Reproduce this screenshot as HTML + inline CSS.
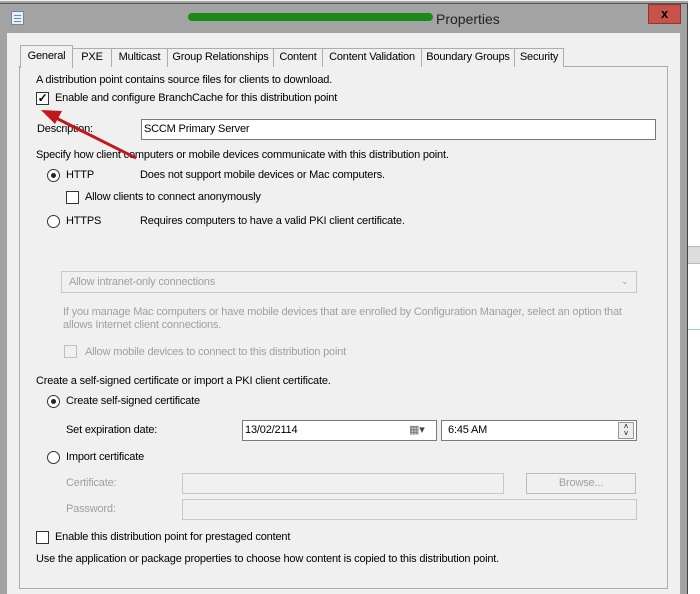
<!DOCTYPE html>
<html><head><meta charset="utf-8"><style>
*{margin:0;padding:0;box-sizing:border-box}
body{width:700px;height:594px;overflow:hidden;background:#fff;font-family:"Liberation Sans",sans-serif;font-size:11px;letter-spacing:-0.18px;color:#000;position:relative}
.a{position:absolute;white-space:nowrap;line-height:14px}
.g{color:#a0a0a0}
.box{position:absolute;background:#fff;border:1px solid #7a7a7a}
.dis{position:absolute;border:1px solid #c8c8c8;background:#f0f0f0}
.cb{position:absolute;width:13px;height:13px;border:1px solid #333;background:#fff}
.rb{position:absolute;width:13px;height:13px;border:1px solid #333;border-radius:50%;background:#fff}
.rb.on::after{content:"";position:absolute;left:3px;top:3px;width:5px;height:5px;border-radius:50%;background:#222}
.tab{position:absolute;top:48px;height:19px;border:1px solid #adadad;border-bottom:none;background:#f0f0f0;text-align:center;line-height:17px;white-space:nowrap;overflow:hidden}
</style></head><body>
<div style="position:absolute;left:0;top:0;width:688px;height:594px;background:#a3a3a3;border-top:1px solid #f0f0f0"></div>
<div style="position:absolute;left:0;top:3px;width:688px;height:1px;background:#555"></div>
<div style="position:absolute;left:687px;top:3px;width:1px;height:591px;background:#444"></div>
<div style="position:absolute;left:688px;top:246px;width:12px;height:18px;background:#ddd;border-top:1px solid #bbb;border-bottom:1px solid #bbb"></div>
<div style="position:absolute;left:688px;top:329px;width:12px;height:1px;background:#9cc"></div>
<div style="position:absolute;left:648px;top:4px;width:33px;height:20px;background:#c7524a;border:1px solid #8a3a35;color:#000;font-weight:bold;text-align:center;line-height:17px;font-size:13px">x</div>
<div style="position:absolute;left:11px;top:11px;width:13px;height:14px;border:1px solid #6a8aa0;background:#e8eef4"><div style="margin:3px 2px;height:1px;background:#6a8aa0;box-shadow:0 3px 0 #6a8aa0,0 6px 0 #6a8aa0"></div></div>
<div style="position:absolute;left:188px;top:13px;width:245px;height:8px;background:#1a8a1a;border-radius:4px"></div>
<div class="a" style="left:436px;top:10px;font-size:14px;letter-spacing:0;line-height:18px;color:#222">Properties</div>
<div style="position:absolute;left:7px;top:33px;width:673px;height:561px;background:#f0f0f0"></div>
<div style="position:absolute;left:19px;top:66px;width:649px;height:523px;border:1px solid #adadad;background:#f0f0f0"></div>
<div class="tab" style="left:72px;width:40px">PXE</div>
<div class="tab" style="left:111px;width:57px">Multicast</div>
<div class="tab" style="left:167px;width:107px">Group Relationships</div>
<div class="tab" style="left:273px;width:50px">Content</div>
<div class="tab" style="left:322px;width:100px">Content Validation</div>
<div class="tab" style="left:421px;width:94px">Boundary Groups</div>
<div class="tab" style="left:514px;width:50px">Security</div>
<div class="tab" style="left:20px;top:45px;width:53px;height:23px;background:#f0f0f0;line-height:21px;z-index:2">General</div>

<div class="a" style="left:36px;top:73px">A distribution point contains source files for clients to download.</div>
<div class="cb" style="left:36px;top:92px;text-align:center;line-height:11px;font-size:12px;font-weight:bold">✓</div>
<div class="a" style="left:55px;top:91px">Enable and configure BranchCache for this distribution point</div>
<div class="a" style="left:37px;top:122px">Description:</div>
<div class="box" style="left:141px;top:119px;width:515px;height:21px"></div>
<div class="a" style="left:144px;top:122px">SCCM Primary Server</div>
<div class="a" style="left:36px;top:148px">Specify how client computers or mobile devices communicate with this distribution point.</div>
<div class="rb on" style="left:47px;top:169px"></div>
<div class="a" style="left:66px;top:168px">HTTP</div>
<div class="a" style="left:140px;top:168px">Does not support mobile devices or Mac computers.</div>
<div class="cb" style="left:66px;top:191px"></div>
<div class="a" style="left:85px;top:190px">Allow clients to connect anonymously</div>
<div class="rb" style="left:47px;top:215px"></div>
<div class="a" style="left:66px;top:214px">HTTPS</div>
<div class="a" style="left:140px;top:214px">Requires computers to have a valid PKI client certificate.</div>
<div class="dis" style="left:61px;top:271px;width:576px;height:22px;background:#f0f0f0;border-color:#c8c8c8"></div>
<div class="a g" style="left:69px;top:275px">Allow intranet-only connections</div>
<div class="a g" style="left:621px;top:274px;font-size:9px">⌄</div>
<div class="a g" style="left:63px;top:305px">If you manage Mac computers or have mobile devices that are enrolled by Configuration Manager, select an option that</div>
<div class="a g" style="left:63px;top:318px">allows Internet client connections.</div>
<div class="cb" style="left:64px;top:345px;border-color:#c0c0c0;background:#f0f0f0"></div>
<div class="a g" style="left:85px;top:345px">Allow mobile devices to connect to this distribution point</div>
<div class="a" style="left:36px;top:374px">Create a self-signed certificate or import a PKI client certificate.</div>
<div class="rb on" style="left:47px;top:395px"></div>
<div class="a" style="left:66px;top:394px">Create self-signed certificate</div>
<div class="a" style="left:66px;top:423px">Set expiration date:</div>
<div class="box" style="left:242px;top:420px;width:195px;height:21px"></div>
<div class="a" style="left:245px;top:423px">13/02/2114</div>
<div class="a" style="left:409px;top:423px;color:#666;font-size:11px">▦<span style="color:#445">▾</span></div>
<div class="box" style="left:441px;top:420px;width:196px;height:21px"></div>
<div class="a" style="left:448px;top:423px">6:45 AM</div>
<div style="position:absolute;left:618px;top:422px;width:16px;height:17px;border:1px solid #999;background:#eee;font-size:8px;line-height:7px;text-align:center">˄<br>˅</div>
<div class="rb" style="left:47px;top:451px"></div>
<div class="a" style="left:66px;top:450px">Import certificate</div>
<div class="a g" style="left:66px;top:476px">Certificate:</div>
<div class="dis" style="left:182px;top:473px;width:322px;height:21px"></div>
<div class="dis" style="left:526px;top:473px;width:110px;height:21px;border-color:#bcbcbc;text-align:center;line-height:19px;color:#a0a0a0">Browse...</div>
<div class="a g" style="left:66px;top:502px">Password:</div>
<div class="dis" style="left:182px;top:499px;width:455px;height:21px"></div>
<div class="cb" style="left:36px;top:531px"></div>
<div class="a" style="left:55px;top:530px">Enable this distribution point for prestaged content</div>
<div class="a" style="left:36px;top:552px">Use the application or package properties to choose how content is copied to this distribution point.</div>

<svg style="position:absolute;left:0;top:0" width="700" height="594"><line x1="136" y1="158" x2="56" y2="118" stroke="#c0191c" stroke-width="3"/><polygon points="41,110 62,111 55,124" fill="#c0191c"/></svg>
</body></html>
